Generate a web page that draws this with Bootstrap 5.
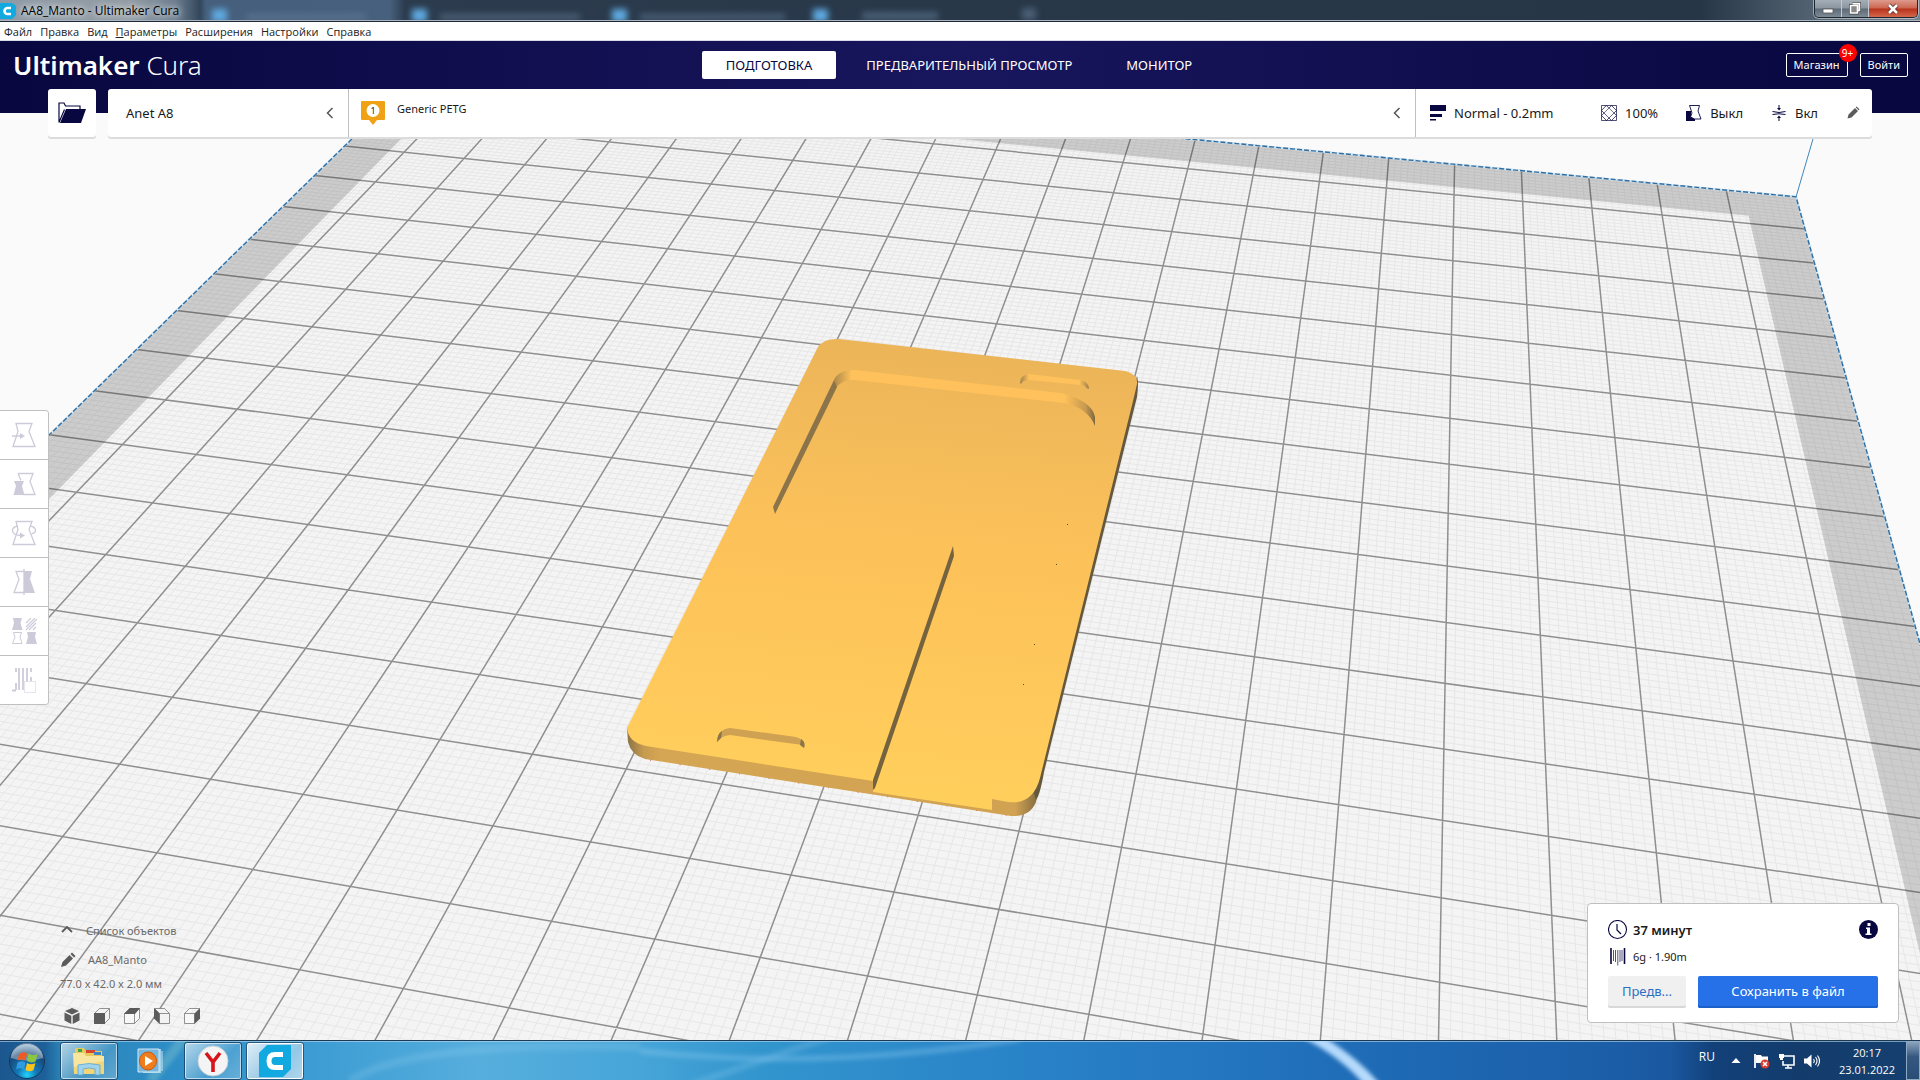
<!DOCTYPE html>
<html lang="ru">
<head>
<meta charset="utf-8">
<meta name="viewport" content="width=device-width, initial-scale=1">
<title>AA8_Manto - Ultimaker Cura</title>
<link rel="stylesheet" href="https://cdn.jsdelivr.net/npm/bootstrap@5.3.0/dist/css/bootstrap.min.css">
<style>
  :root { --navy: #08073f; --rule: #c0c0c0; --ink: #191919; }
  body { font-family: "Noto Sans", sans-serif; font-size: 13px; line-height: 20px; color: var(--ink); background: #fafafa; }
  button { font: inherit; color: inherit; }
  svg { flex: none; display: block; }

  /* window frame */
  .title-strip { height: 22px; position: relative; overflow: hidden; border-bottom: 1px solid #1d2936;
    background: linear-gradient(90deg, #8e9aa6 0, #939ca4 130px, #6d7e90 175px, #33475c 200px, #465f7c 206px, #47607d 390px, #2c3c4e 405px, #283849 50%, #263647 1700px, #4b5a69 1790px, #77838f 100%); }
  .title-strip::after { content: ""; position: absolute; inset: auto 0 0 0; height: 1px; background: #a9b4bf; }
  .title-text { font-family: "Open Sans", sans-serif; font-size: 12px; line-height: 22px; color: #000; text-shadow: 0 0 6px #fff, 0 0 8px #dde3e8; }
  .tab-ghosts { position: absolute; left: 200px; top: 0; filter: blur(3px); }
  .win-keys { border: 1px solid #1b2631; border-top: 0; border-radius: 0 0 5px 5px; height: 18px; overflow: hidden; box-shadow: 0 0 0 1px rgba(255,255,255,.45); margin-right: 2px; }
  .win-keys button { border: 0; padding: 0; height: 17px; width: 27px; background: linear-gradient(#a5aeb7 0, #8a95a0 48%, #5d6a77 52%, #7e8a96); border-right: 1px solid #c3cbd2; }
  .win-keys .key-close { width: 48px; border-right: 0; background: linear-gradient(#dd9b8c 0, #cc6650 48%, #b7321b 52%, #d4674b); }

  .menu-strip { background: #fff; height: 19px; border-bottom: 1px solid #d9dbe8; font-family: "Open Sans", sans-serif; font-size: 11px; line-height: 20px; }
  .menu-strip a { color: #222; text-decoration: none; padding: 0 4px; }

  /* application header */
  .app-header { height: 72px; background: linear-gradient(90deg, #08073f, #18165d 50%, #08073f); }
  .app-bar { height: 48px; }
  .brand { font-size: 26px; line-height: 48px; color: #fff; padding-left: 13px; text-decoration: none; }
  .brand strong { font-weight: 600; }
  .brand span { font-weight: 300; }
  .stage-tabs { gap: 6px; margin-left: 10px; }
  .account-keys { gap: 12px; padding-right: 12px; }
  .stage-tab { border: 0; border-radius: 2px; background: transparent; color: #fff; height: 28px; padding: 0 24px; line-height: 26px; }
  .stage-tab.current { background: #fff; color: var(--navy); }
  .outline-key { border: 1px solid #fff; border-radius: 2px; background: transparent; color: #fff; height: 24px; font-size: 11px; line-height: 22px; padding: 0 7px; position: relative; }
  .count-dot { position: absolute; right: -10px; top: -10px; width: 18px; height: 18px; border-radius: 50%; background: #f00; color: #fff; font-size: 10px; line-height: 18px; text-align: center; }

  /* stage */
  .stage { position: relative; }
  .scene { position: absolute; inset: 0; width: 100%; height: 100%; }
  .layer { position: relative; }
  .stage-menu { margin: -24px 48px 0; gap: 12px; }
  .sheet { background: #fff; border-radius: 3px; box-shadow: 0 2px 0 #dcdcdc; height: 48px; }
  .sheet button { border: 0; background: transparent; padding: 0; height: 48px; text-align: left; }
  .pick-folder { width: 48px; }
  .pick-folder button { place-items: center; }
  .pick-printer { width: 240px; }
  .pick-printer > button { padding: 0 13px 0 18px; }
  .pick-material { border-left: 1px solid var(--rule); border-right: 1px solid var(--rule); }
  .pick-material > button { padding: 0 13px 0 12px; }
  .mat-name { font-size: 11px; padding-bottom: 8px; }
  .pick-print { width: 456px; }
  .pick-print > button { padding: 0 12px 0 14px; }
  .print-facts { gap: 28px; }

  .tool-zone { padding-top: 74px; }
  .tool-rail { width: 49px; background: #fff; border: 1px solid var(--rule); border-left: 0; border-radius: 0 4px 4px 0; overflow: hidden; }
  .tool-rail button { display: grid; place-items: center; width: 100%; height: 49px; padding: 0; border: 0; border-bottom: 1px solid var(--rule); background: #fff; }
  .tool-rail button:last-child { border-bottom: 0; height: 48px; }

  .object-zone { color: #6a6a6a; font-size: 11px; padding-left: 60px; padding-bottom: 16px; }
  .object-zone button { border: 0; background: transparent; padding: 0; }
  .row-gap { height: 29px; }
  .view-keys { gap: 14px; margin-top: 14px; padding-left: 4px; }

  .job-card { width: 312px; background: #fff; border: 1px solid var(--rule); border-radius: 4px; padding: 16px 20px 14px; margin: 0 21px 17px 0; }
  .job-time { font-weight: 600; height: 19px; gap: 5px; }
  .job-mass { font-size: 11px; height: 18px; margin-top: 9px; gap: 5px; }
  .job-keys { gap: 12px; margin-top: 10px; }
  .job-keys button { border: 0; border-radius: 2px; height: 32px; padding: 0 8px 2px; }
  .key-preview { width: 78px; background: #f0f0f0; color: #2b6fc4 !important; box-shadow: inset 0 -2px 0 #d8d8d8; }
  .key-save { background: #2670e8; color: #fff !important; box-shadow: inset 0 -2px 0 #1b60c8; }

  /* desktop taskbar */
  .desk-bar { height: 40px; position: relative; overflow: hidden; border-top: 1px solid #1c3a56; color: #fff; font-family: "Open Sans", sans-serif; font-size: 11px;
    background: linear-gradient(90deg, #1c578f 0, #1d6099 45px, #2c86b9 62px, #2d8cc5 160px, #3b9bd2 300px, #56aedd 480px, #47a5d8 640px, #3295cd 760px, #2a84c8 1000px, #2477c1 1200px, #1e69b4 1400px, #1c5fa9 1600px, #1a58a0 1670px, #124078 1715px, #133c6c 1800px, #15406f 100%); }
  .desk-bar .sheen { position: absolute; inset: 0; width: 100%; height: 100%; }
  .desk-bar button { border: 0; background: transparent; padding: 0; color: #fff; }
  .desk-bar .task-key { width: 58px; height: 38px; display: grid; place-items: center; border-radius: 3px; }
  .desk-bar .start-key { width: 56px; }
  .desk-bar .running { border: 1px solid #1d4d73; box-shadow: inset 0 0 0 1px rgba(255,255,255,.6); background: linear-gradient(135deg, rgba(255,255,255,.65), rgba(255,255,255,.12) 60%, rgba(255,255,255,.25)); }
  .desk-bar .focused { border: 1px solid #24587d; box-shadow: inset 0 0 0 1px #fff; background: linear-gradient(135deg, rgba(255,255,255,.85), rgba(255,255,255,.45) 60%, rgba(255,255,255,.6)); }
  .tray-lang { font-size: 12px; }
  .tray-icons { gap: 9px; margin-left: 12px; }
  .tray-clock { line-height: 17px; width: 62px; }
  .desk-bar .peek { width: 14px; height: 39px; border: 1px solid #8fa9c3; background: linear-gradient(#8ba3bd, #36587f 40%, #2a4d76); }
</style>
</head>
<body class="d-flex flex-column min-vh-100">

<header class="title-strip d-flex justify-content-between align-items-start">
  <svg class="tab-ghosts" width="900" height="22" viewBox="0 0 900 22" aria-hidden="true">
    <g fill="#5ea9e0"><rect x="12" y="9" width="15" height="13"/><rect x="212" y="9" width="15" height="13"/><rect x="412" y="9" width="15" height="13"/><rect x="613" y="9" width="15" height="13"/></g>
    <g fill="#6b84a0" opacity=".5"><rect x="46" y="14" width="120" height="6"/><rect x="240" y="14" width="140" height="6"/><rect x="440" y="14" width="145" height="6"/><rect x="662" y="12" width="76" height="8"/><rect x="822" y="8" width="14" height="12"/></g>
  </svg>
  <div class="layer d-flex gap-1">
    <svg width="17" height="20" viewBox="0 0 17 20" aria-hidden="true"><path d="M0 3h12l4 3v9l-4 4H0z" fill="#12a8e0"/><path d="M11 8H7.500a3 3 0 0 0 0 6H11" fill="none" stroke="#fff" stroke-width="2.600"/></svg>
    <span class="title-text">AA8_Manto - Ultimaker Cura</span>
  </div>
  <div class="win-keys layer d-flex">
    <button type="button" aria-label="Свернуть"><svg class="mx-auto" width="14" height="12" viewBox="0 0 14 12"><rect x="2" y="6" width="10" height="4" fill="#fff" stroke="#555" stroke-width=".8"/></svg></button>
    <button type="button" aria-label="Развернуть"><svg class="mx-auto" width="14" height="13" viewBox="0 0 14 13"><path d="M4.500 1.500h7v7h-2M2.500 3.500h7v7.500h-7z" fill="none" stroke="#444" stroke-width="3"/><path d="M4.500 1.500h7v7h-2M2.500 3.500h7v7.500h-7z" fill="#888" stroke="#fff" stroke-width="1.600"/></svg></button>
    <button type="button" class="key-close" aria-label="Закрыть"><svg class="mx-auto" width="14" height="12" viewBox="0 0 14 12"><path d="M3 2l8 8M11 2l-8 8" stroke="#5a2a22" stroke-width="4.200"/><path d="M3 2l8 8M11 2l-8 8" stroke="#fff" stroke-width="2.600"/></svg></button>
  </div>
</header>

<nav class="menu-strip d-flex" aria-label="Меню">
  <a href="#">Файл</a><a href="#">Правка</a><a href="#">Вид</a><a href="#"><u>П</u>араметры</a><a href="#">Расширения</a><a href="#">Настройки</a><a href="#">Справка</a>
</nav>

<div class="app-header">
  <div class="app-bar d-flex align-items-center">
    <div class="col"><a class="brand" href="#"><strong>Ultimaker</strong> <span>Cura</span></a></div>
    <div class="stage-tabs d-flex">
      <button type="button" class="stage-tab current">ПОДГОТОВКА</button>
      <button type="button" class="stage-tab">ПРЕДВАРИТЕЛЬНЫЙ ПРОСМОТР</button>
      <button type="button" class="stage-tab">МОНИТОР</button>
    </div>
    <div class="account-keys col d-flex justify-content-end">
      <button type="button" class="outline-key">Магазин<span class="count-dot">9+</span></button>
      <button type="button" class="outline-key">Войти</button>
    </div>
  </div>
</div>

<main class="stage flex-grow-1 d-flex flex-column">
  <svg class="scene" viewBox="0 113 1920 927" preserveAspectRatio="xMidYMin slice" role="img" aria-label="Стол принтера с моделью AA8_Manto">
    <defs>
      <linearGradient id="top" gradientUnits="userSpaceOnUse" x1="900" y1="340" x2="860" y2="810"><stop offset="0" stop-color="#ebb458"/><stop offset=".25" stop-color="#f5bc5a"/><stop offset=".42" stop-color="#fcc159"/><stop offset=".75" stop-color="#ffc95b"/><stop offset="1" stop-color="#ffd05c"/></linearGradient>
      <linearGradient id="side" gradientUnits="userSpaceOnUse" x1="627" y1="0" x2="1040" y2="0"><stop offset="0" stop-color="#8a7145"/><stop offset=".04" stop-color="#c69b50"/><stop offset=".08" stop-color="#d5a653"/><stop offset=".94" stop-color="#d0a252"/><stop offset="1" stop-color="#7d6740"/></linearGradient>
      <linearGradient id="wall" gradientUnits="userSpaceOnUse" x1="833" y1="0" x2="1096" y2="0"><stop offset="0" stop-color="#a98549"/><stop offset=".07" stop-color="#fec15b"/><stop offset=".88" stop-color="#fec15b"/><stop offset=".96" stop-color="#c69a50"/><stop offset="1" stop-color="#77623d"/></linearGradient>
      <linearGradient id="slot" gradientUnits="userSpaceOnUse" x1="1019" y1="0" x2="1090" y2="0"><stop offset="0" stop-color="#94784a"/><stop offset=".14" stop-color="#fec15b"/><stop offset=".85" stop-color="#fec15b"/><stop offset="1" stop-color="#94784a"/></linearGradient>
    </defs>
    <rect x="0" y="0" width="1920" height="1080" fill="#fafafa"/>
    <path id="plate" fill="#f4f4f4"/>
    <path id="fine" fill="none" stroke="#e7e7e7" stroke-width="1"/>
    <path id="coarse" fill="none" stroke="#8f8f90" stroke-width="1.500"/>
    <path id="margin" fill="#000" fill-opacity=".16" fill-rule="evenodd"/>
    <path id="rim" fill="none" stroke="#d7eaf7" stroke-width="2"/>
    <path id="rimdash" fill="none" stroke="#2f6ea3" stroke-width="1.400" stroke-dasharray="5 2"/>
    <path d="M1796 197L1837 57" stroke="#3f86bb" fill="none"/>
    <g id="model">
      <path d="M650 760L1012 816" stroke="#d33" stroke-width="1" stroke-dasharray="1 29" fill="none"/>
      <path d="M627 728L628 742Q631 755 645 759L1011 816Q1030 817 1036 802L1040 780L992 770L640 720z" fill="url(#side)"/>
      <path d="M1137 376Q1139 383 1137 397L1044 772Q1040 795 1036 800L1030 780z" fill="#65583c"/>
      <path d="M818 347Q824 338 839 339L1125 371Q1138 374 1137 384L1134 397L1040 778Q1033 805 1008 802L992 799V810L873 792V781L646 746Q628 742 627 728z" fill="url(#top)"/>
      <path d="M834 380Q838 370 855 370L1061 393Q1092 401 1095 417V426Q1088 408 1064 403L855 380Q842 379 836 388z" fill="url(#wall)"/>
      <path d="M834 380L773 507L775 514L837 387z" fill="#8b744a"/>
      <path d="M1020 383Q1020 375 1029 374L1080 380Q1089 382 1089 389L1086 388Q1085 385 1081 385L1029 380Q1023 380 1021 384z" fill="url(#slot)"/>
      <path d="M717 742Q718 729 730 728L796 737Q806 740 804 748Q802 744 795 744L730 735Q721 736 717 742z" fill="#cfa152"/>
      <path d="M717 742Q717 734 722 731L721 738zM804 748Q806 742 801 739L800 745z" fill="#8b744a"/>
      <path d="M953 546L954 556L875 788L873 790V780z" fill="#75633f"/>
      <path d="M1067 524h1v1h-1zM1056 564h1v1h-1zM1034 644h1v1h-1zM1023 684h1v1h-1z" fill="#5a4a26"/>
    </g>
  </svg>

  <div class="stage-menu layer d-flex">
    <div class="sheet pick-folder"><button type="button" class="w-100 d-grid" aria-label="Открыть файл">
      <svg width="28" height="22" viewBox="0 0 28 22" aria-hidden="true"><path d="M1 20.500V1h5l1.500 3H22v3.500M1 20.500L6.500 7.500" fill="none" stroke="#08073f" stroke-width="1.200"/><path d="M2 21L8 7h20l-5 14z" fill="#08073f"/></svg></button></div>
    <div class="sheet d-flex flex-grow-1">
      <div class="pick-printer"><button type="button" class="w-100 d-flex align-items-center justify-content-between"><span>Anet A8</span>
        <svg width="10" height="12" viewBox="0 0 10 12" aria-hidden="true"><path d="M7.500 1L2.500 6l5 5" fill="none" stroke="#555" stroke-width="1.500"/></svg></button></div>
      <div class="pick-material flex-grow-1"><button type="button" class="w-100 d-flex align-items-center gap-2"><svg class="me-1" width="24" height="24" viewBox="0 0 24 24" aria-hidden="true"><path d="M1 0h22a1 1 0 0 1 1 1v17a1 1 0 0 1-1 1h-7l-4 5-4-5H1a1 1 0 0 1-1-1V1a1 1 0 0 1 1-1z" fill="#f0a216"/><circle cx="12" cy="9.500" r="6.500" fill="#fff"/><text x="12" y="13" font-size="9" text-anchor="middle" fill="#191919">1</text></svg>
        <span class="mat-name me-auto">Generic PETG</span>
        <svg width="10" height="12" viewBox="0 0 10 12" aria-hidden="true"><path d="M7.500 1L2.500 6l5 5" fill="none" stroke="#555" stroke-width="1.500"/></svg></button></div>
      <div class="pick-print"><button type="button" class="w-100 d-flex align-items-center">
        <span class="d-flex align-items-center gap-2 me-auto"><svg width="16" height="16" viewBox="0 0 16 16" aria-hidden="true"><path d="M0 0h16v6H0zM0 9h12v3H0zM0 14h6v1.500H0z" fill="#08073f"/></svg>Normal - 0.2mm</span>
        <span class="print-facts d-flex align-items-center">
          <span class="d-flex align-items-center gap-2"><svg width="16" height="16" viewBox="0 0 16 16" aria-hidden="true"><path d="M.5.5h15v15H.5zM5.300.5l-4.800 5M10.600.5L.5 10.600M15.500 5.500l-10 10M15.500 10.500l-5 5M10.500.5l5 5M5.300.5l10.200 10M.5 5.500l10 10M.5 10.500l5 5" fill="none" stroke="#08073f" stroke-width=".7"/><path d="M8 3.500l4.500 4.500L8 12.500 3.500 8z" fill="#fff"/></svg>100%</span>
          <span class="d-flex align-items-center gap-2"><svg width="16" height="16" viewBox="0 0 16 16" aria-hidden="true"><path d="M0 6h5v6h4v4H0z" fill="#08073f"/><path d="M3.500.5h10l-1.500 5.500 3 8H8.500l-4-2 1.500-4z" fill="#fff" stroke="#08073f" stroke-width=".9"/></svg>Выкл</span>
          <span class="d-flex align-items-center gap-2"><svg width="16" height="16" viewBox="0 0 16 16" aria-hidden="true"><path d="M1.500 6.500q6.500 2 13 0M1.500 9.500q6.500-1.500 13 0M8 0v4M8 12v4" fill="none" stroke="#08073f"/><path d="M6 3h4L8 5.500zM6 13h4l-2-2.500z" fill="#08073f"/></svg>Вкл</span>
          <svg width="14" height="14" viewBox="0 0 14 14" aria-hidden="true"><path d="M1.500 12.500l1-4 6.500-6.500 3 3-6.500 6.500zM9.700 1.300l1-.800 2.800 2.800-.900 1z" fill="#5b5b5b"/></svg>
        </span></button></div>
    </div>
  </div>

  <div class="tool-zone layer flex-grow-1 d-flex align-items-center">
    <div class="tool-rail" role="toolbar" aria-label="Инструменты">
      <button type="button" aria-label="Переместить"><svg width="26" height="26" viewBox="0 0 26 26" fill="none" stroke="#cdcbd9" stroke-width="1.300"><path d="M5 1.500h16l-3 8 6 15H2l5-15z"/><path d="M1 14h9"/><path d="M9 11l5 3-5 3z" fill="#cdcbd9" stroke="none"/></svg></button>
      <button type="button" aria-label="Масштаб"><svg width="26" height="26" viewBox="0 0 26 26" fill="none" stroke="#cdcbd9" stroke-width="1.300"><path d="M7 2.500h15l-3 8 5 13H12M7 2.500l3 7"/><path d="M3 10h10l-2 5 2.500 9h-11L5 15z" fill="#cdcbd9" stroke="none"/></svg></button>
      <button type="button" aria-label="Поворот"><svg width="26" height="26" viewBox="0 0 26 26" fill="none" stroke="#cdcbd9" stroke-width="1.300"><path d="M5 1.500h16l-3 8 6 15H2l5-15z"/><path d="M7 6q-6 1-5.500 5t8 4.500M19 6q6 1 5.500 5-.500 2-4 3"/><path d="M9 12.500l5 3-5 3z" fill="#cdcbd9" stroke="none"/></svg></button>
      <button type="button" aria-label="Зеркало"><svg width="26" height="26" viewBox="0 0 26 26" fill="none" stroke="#cdcbd9" stroke-width="1.300"><path d="M13 2.500H5l3 8-5 13h10M13 0v26"/><path d="M13 2h8l-2 8 5 14H13z" fill="#cdcbd9" stroke="none"/></svg></button>
      <button type="button" aria-label="Параметры модели"><svg width="26" height="26" viewBox="0 0 26 26" fill="#cdcbd9"><path d="M2 0h9L9.500 5l2 7H1L3 5zM16 14h9l-1 5 2 7H15l2-7z"/><path d="M2.500 14.500h8L9 19l2 6.500H1.500L4 19z" fill="none" stroke="#cdcbd9"/><path d="M15 5l5-5M15 9l9-9M15 12L26 1M18 12l7-7M22 12l3-3" stroke="#cdcbd9" stroke-width="1.200"/></svg></button>
      <button type="button" aria-label="Блокировка поддержки"><svg width="26" height="26" viewBox="0 0 26 26"><path d="M5 1v4M5 16v7M8 1v22M12 1v22M16 1v14M20 1v4M20 10v4M1 23.500h4" fill="none" stroke="#cdcbd9" stroke-width="1.800"/><rect x="13.500" y="14.500" width="11" height="11" fill="#fff" stroke="#cdcbd9" stroke-dasharray="1 1"/></svg></button>
    </div>
  </div>

  <div class="layer d-flex justify-content-between align-items-end">
    <div class="object-zone">
      <button type="button" class="row-gap d-flex align-items-center"><svg width="14" height="10" viewBox="0 0 14 10" aria-hidden="true"><path d="M2 6l5-5 5 5" fill="none" stroke="#5b5b5b" stroke-width="1.800"/></svg><span class="ps-2 ms-1">Список объектов</span></button>
      <div class="row-gap d-flex align-items-center"><svg width="16" height="16" viewBox="0 0 16 16" aria-hidden="true"><path d="M1 15l1.500-5L9.500 3l3.500 3.500-7 7zM10.500 2l1.500-1.500L15.500 4 14 5.500z" fill="#5b5b5b"/></svg><span class="ps-2 ms-1">AA8_Manto</span></div>
      <div>77.0 x 42.0 x 2.0 мм</div>
      <div class="view-keys d-flex">
        <button type="button" aria-label="Трёхмерный вид"><svg width="16" height="16" viewBox="0 0 16 16" fill="#5b5b5b"><path d="M8 0l7 3-7 3.500L1 3zM.5 4.500L7.300 7.800V16L.5 12.500zM15.500 4.500L8.700 7.800V16l6.800-3.500z"/></svg></button>
        <button type="button" aria-label="Спереди"><svg width="16" height="16" viewBox="0 0 16 16"><path d="M.5 5.500h10v10H.5zM.5 5.500l5-5h10v10l-5 5M10.500 5.500l5-5" fill="#f3f3f3" stroke="#777" stroke-width=".8"/><path d="M0 5h11v11H0z" fill="#5b5b5b"/></svg></button>
        <button type="button" aria-label="Сверху"><svg width="16" height="16" viewBox="0 0 16 16"><path d="M.5 5.500h10v10H.5zM.5 5.500l5-5h10v10l-5 5M10.500 5.500l5-5" fill="#f8f8f8" stroke="#777" stroke-width=".8"/><path d="M0 6l6-6h10l-5 6z" fill="#5b5b5b"/></svg></button>
        <button type="button" aria-label="Слева"><svg width="16" height="16" viewBox="0 0 16 16"><path d="M5.500 5.500h10v10h-10zM5.500 5.500l-5-5h10l5 5" fill="#f3f3f3" stroke="#777" stroke-width=".8"/><path d="M0 0l5.500 5.500V16L0 10.500z" fill="#5b5b5b"/></svg></button>
        <button type="button" aria-label="Справа"><svg width="16" height="16" viewBox="0 0 16 16"><path d="M.5 5.500h10v10H.5zM.5 5.500l5-5h10" fill="#f8f8f8" stroke="#777" stroke-width=".8"/><path d="M10.500 5.500L16 0v10.500L10.500 16z" fill="#5b5b5b"/></svg></button>
      </div>
    </div>

    <section class="job-card">
      <div class="job-time d-flex align-items-center"><svg width="20" height="20" viewBox="0 0 20 20" aria-hidden="true"><circle cx="9.500" cy="9.500" r="9" fill="none" stroke="#08073f" stroke-width="1.100"/><path d="M9 4v6l4 4" fill="none" stroke="#08073f" stroke-width="1.200"/></svg><span class="me-auto">37 минут</span>
        <svg width="19" height="19" viewBox="0 0 19 19" aria-hidden="true"><circle cx="9.500" cy="9.500" r="9.500" fill="#08073f"/><path d="M8.500 3h3v3h-3zM7 7.500h4v6h1.500V15H6.500v-1.500H8V9H7z" fill="#fff"/></svg></div>
      <div class="job-mass d-flex align-items-center"><svg width="20" height="18" viewBox="0 0 20 18" aria-hidden="true"><path d="M3 0v16M16.500 0v16" stroke="#08073f" stroke-width="1.600"/><path d="M5.500 2v11M7.500 2v12M9.800 2v15.500M12 2v12M14 2v11" stroke="#08073f" stroke-width=".7"/></svg>6g · 1.90m</div>
      <div class="job-keys d-flex"><button type="button" class="key-preview">Предв...</button><button type="button" class="key-save flex-grow-1">Сохранить в файл</button></div>
    </section>
  </div>
</main>

<footer class="desk-bar d-flex align-items-center">
  <svg class="sheen" viewBox="0 0 1920 39" preserveAspectRatio="none" aria-hidden="true">
    <defs><filter id="soft" x="-20%" y="-50%" width="140%" height="200%"><feGaussianBlur stdDeviation="2"/></filter></defs>
    <g filter="url(#soft)"><path d="M1302-4h22q38 24 58 50h-16q-22-28-64-50z" fill="#b5dafc"/><path d="M640 10q180 20 380-12" stroke="#8ccbf0" stroke-opacity=".35" stroke-width="6" fill="none"/><path d="M690 44L830-4" stroke="#8ccbf0" stroke-opacity=".25" stroke-width="7"/><path d="M350 40q60-40 290-34" stroke="#bfe3f7" stroke-opacity=".15" stroke-width="8" fill="none"/><path d="M150 40L185-4" stroke="#9fdcd0" stroke-opacity=".3" stroke-width="10"/></g>
    <path d="M0 .5h1920" stroke="#b9dcf2" stroke-opacity=".6"/>
  </svg>
  <div class="layer d-flex align-items-center">
    <button type="button" class="task-key start-key" aria-label="Пуск">
      <svg width="40" height="38" viewBox="0 0 40 38"><defs><radialGradient id="orb" cx=".5" cy=".9" r=".9"><stop offset="0" stop-color="#22d3fb"/><stop offset=".3" stop-color="#1279b8"/><stop offset=".7" stop-color="#184a7a"/><stop offset="1" stop-color="#9fc0d8"/></radialGradient></defs><circle cx="19" cy="19" r="17.500" fill="url(#orb)" stroke="#14395c"/><path d="M3 16a16 15 0 0 1 32 0q-16 5-32 0z" fill="#fff" opacity=".35"/><path d="M11 12q4-3 8-.500l-1.500 7q-4-2-8 0z" fill="#ee5a24"/><path d="M20.500 11.500q4 3 9 .500l-2 7.500q-4 2-8.500-.500z" fill="#8cc63f"/><path d="M9.500 20.500q4-2.500 8 0L16 27.500q-4-2.500-8 0z" fill="#2f9be0"/><path d="M19 21q4 2.500 8.500 0L25.500 28q-4 2.500-8 0z" fill="#fcc419"/></svg></button>
    <button type="button" class="task-key running ms-1" aria-label="Проводник">
      <svg width="34" height="32" viewBox="0 0 34 32"><path d="M3 3h9l2 3h16v23H3z" fill="#e9c95e"/><path d="M6 4h4v3H6z" fill="#3aa64a"/><path d="M14 5h9v3h-9z" fill="#d8432e"/><path d="M22 7h7v3h-7z" fill="#3a86cf"/><path d="M1 8h11l2 3h18v18H2z" fill="#f8e6a0"/><path d="M2 22l30-6v13H2z" fill="#f1d679"/><path d="M6 20q11-3 22 0v10h-5v-6q-6-2-12 0v6H6z" fill="#9fd3ee" stroke="#5ba7cf" stroke-width=".8"/></svg></button>
    <button type="button" class="task-key ms-1" aria-label="Проигрыватель">
      <svg width="28" height="26" viewBox="0 0 28 26"><path d="M6 1h18v24H6z" fill="#b8def2" opacity=".8"/><path d="M1 1h21v23H1z" fill="#76b6dc" stroke="#cfe8f6"/><path d="M25 3v20" stroke="#cfe8f6"/><ellipse cx="11" cy="13" rx="8.500" ry="9" fill="#ef7d1e" stroke="#c9590e"/><path d="M8 8l8 5-8 5z" fill="#fff"/></svg></button>
    <button type="button" class="task-key running ms-1" aria-label="Яндекс Браузер">
      <svg width="32" height="32" viewBox="0 0 32 32"><circle cx="16" cy="16" r="15" fill="#f4f4f4" stroke="#c9d3da"/><path d="M9 8l7 9 7-9M16 16v11" fill="none" stroke="#d8131b" stroke-width="3.600"/></svg></button>
    <button type="button" class="task-key focused ms-1" aria-label="Ultimaker Cura">
      <svg width="32" height="32" viewBox="0 0 32 32"><path d="M8 0h24v24l-8 8H0V8z" fill="#12a8e0"/><path d="M24 9.500h-8q-6 0-6 6.500t6 6.500h8" fill="none" stroke="#fff" stroke-width="5"/></svg></button>
  </div>
  <div class="layer ms-auto d-flex align-items-center">
    <span class="tray-lang pb-2 me-3">RU</span>
    <button type="button" aria-label="Скрытые значки"><svg width="10" height="6" viewBox="0 0 10 6"><path d="M5 0l4.500 5h-9z" fill="#fff"/></svg></button>
    <div class="tray-icons d-flex align-items-center me-3">
      <svg width="17" height="18" viewBox="0 0 17 18" aria-hidden="true"><path d="M2 2v14" stroke="#fff" stroke-width="1.800"/><path d="M3 3h5l1 1.500h6V11H3z" fill="#fff"/><circle cx="12" cy="12" r="4.500" fill="#d83a2b"/><path d="M10 10l4 4M14 10l-4 4" stroke="#fff" stroke-width="1.500"/></svg>
      <svg width="16" height="16" viewBox="0 0 16 16" aria-hidden="true"><path d="M5 3h10v9H4V8M9 12v3M6 15h7" fill="none" stroke="#fff" stroke-width="1.600"/><path d="M0 1h5v4H4v2H1V5H0z" fill="#fff"/></svg>
      <svg width="16" height="16" viewBox="0 0 16 16" aria-hidden="true"><path d="M0 5.500h3l4.500-4v13l-4.500-4H0z" fill="#fff"/><path d="M9.500 6q1.500 2 0 4M11.500 4q3 4 0 8M13.500 2.500q4 5.500 0 11" fill="none" stroke="#fff" stroke-width="1.100"/></svg>
    </div>
    <div class="tray-clock text-center">20:17<br>23.01.2022</div>
    <button type="button" class="peek ms-2" aria-label="Показать рабочий стол"></button>
  </div>
</footer>

<script src="https://cdn.jsdelivr.net/npm/bootstrap@5.3.0/dist/js/bootstrap.bundle.min.js"></script>
<script>
  // Perspective of the build plate: 22 x 22 cells of 10 mm, u to the right, k towards the viewer.
  const cam = [52.97746, -35.41909, 426.03571, 4.90444, 23.04127, 66.49361, -0.00517545, -0.02400855];
  const at = (u, k) => {
    const w = cam[6] * u + cam[7] * k + 1;
    return ((cam[0] * u + cam[1] * k + cam[2]) / w).toFixed(1) + ' ' + ((cam[3] * u + cam[4] * k + cam[5]) / w).toFixed(1);
  };
  const ring = (a, b) => `M${at(a, a)}L${at(b, a)}L${at(b, b)}L${at(a, b)}z`;
  const size = 22, border = 0.76;
  let fine = '', coarse = '';
  for (let i = 0; i <= size * 10; i++) {
    const t = i / 10, line = `M${at(t, 0)}L${at(t, size)}M${at(0, t)}L${at(size, t)}`;
    if (i % 10) fine += line; else coarse += line;
  }
  const put = (id, d) => document.getElementById(id).setAttribute('d', d);
  put('plate', ring(0, size));
  put('fine', fine);
  put('coarse', coarse);
  put('margin', ring(0, size) + ring(border, size - border));
  put('rim', ring(0, size));
  put('rimdash', ring(0, size));
</script>
</body>
</html>
